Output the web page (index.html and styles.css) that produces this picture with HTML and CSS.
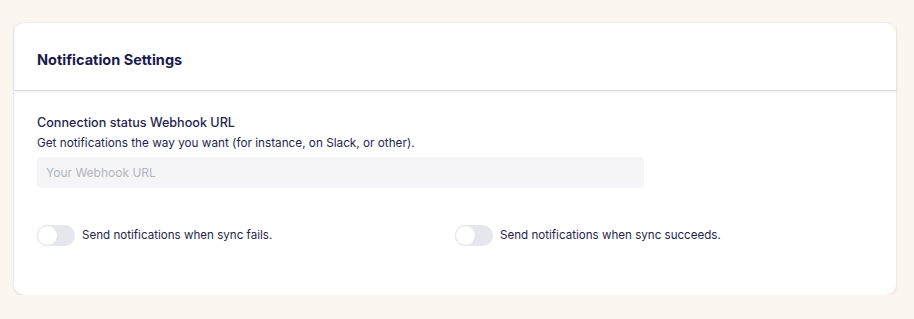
FILE: index.html
```html
<!DOCTYPE html>
<html lang="en">
<head>
<meta charset="utf-8">
<title>Notification Settings</title>
<link rel="stylesheet" href="styles.css">
</head>
<body>
<section class="card">
  <header class="card-header">
    <h2 class="card-title">Notification Settings</h2>
  </header>
  <div class="card-body">
    <div class="field">
      <label class="field-label" for="webhook">Connection status Webhook URL</label>
      <p class="field-desc">Get notifications the way you want (for instance, on Slack, or other).</p>
      <input class="field-input" id="webhook" type="text" placeholder="Your Webhook URL">
    </div>
    <div class="toggles">
      <label class="toggle-row">
        <span class="toggle"><span class="knob"></span></span>
        <span class="toggle-text">Send notifications when sync fails.</span>
      </label>
      <label class="toggle-row">
        <span class="toggle"><span class="knob"></span></span>
        <span class="toggle-text">Send notifications when sync succeeds.</span>
      </label>
    </div>
  </div>
</section>
</body>
</html>
```
FILE: styles.css
```css
html, body {
  margin: 0;
  padding: 0;
  background: #fbf6f0;
}
body {
  padding: 23px 18px 0 14px;
  font-family: Inter, "Liberation Sans", sans-serif;
  color: #1a1a4b;
}
.card {
  background: #ffffff;
  border-radius: 10px;
  box-shadow: 0 1px 3px rgba(26, 26, 75, 0.12), 0 0 1px rgba(26, 26, 75, 0.08);
}
.card-header {
  height: 68px;
  box-sizing: border-box;
  padding: 6px 23px 0;
  display: flex;
  align-items: center;
  border-bottom: 1px solid #d6d6db;
  box-shadow: 0 1px 2px rgba(26, 26, 75, 0.08);
}
.card-title {
  margin: 0;
  font-size: 14.5px;
  font-weight: 700;
  color: #1a1a4b;
  line-height: 18px;
}
.card-body {
  padding: 24px 23px 49px;
}
.field {
  display: flex;
  flex-direction: column;
}
.field-label {
  font-size: 12.6px;
  font-weight: 500;
  line-height: 16px;
  color: #27264a;
}
.field-desc {
  margin: 5px 0 0;
  font-size: 11.75px;
  line-height: 15px;
  color: #27264a;
}
.field-input {
  margin-top: 6px;
  width: 607px;
  height: 31px;
  box-sizing: border-box;
  border: none;
  border-radius: 4px;
  background: #f5f5f7;
  padding: 0 9px;
  font-family: inherit;
  font-size: 12px;
  color: #27264a;
  outline: none;
}
.field-input::placeholder {
  color: #b4b4bf;
}
.toggles {
  margin-top: 37px;
  display: grid;
  grid-template-columns: 1fr 1fr;
}
.toggle-row {
  display: flex;
  align-items: center;
  gap: 7px;
}
.toggle {
  width: 38px;
  height: 21px;
  border-radius: 11px;
  background: #e6e6ed;
  display: flex;
  align-items: center;
  flex: none;
}
.knob {
  width: 19px;
  height: 19px;
  border-radius: 50%;
  background: #ffffff;
  border: 1px solid #e2e2e8;
  box-sizing: content-box;
}
.toggle-text {
  font-size: 11.6px;
  line-height: 15px;
  color: #27264a;
}
```
